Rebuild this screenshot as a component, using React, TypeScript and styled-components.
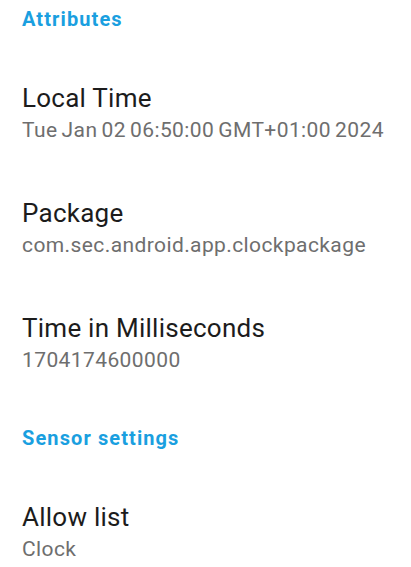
import React from "react";
import styled, { createGlobalStyle } from "styled-components";

const Global = createGlobalStyle`
  html, body { margin: 0; padding: 0; background: #ffffff; }
  body { font-family: Roboto, "Noto Sans", sans-serif; }
`;

const Page = styled.div`
  display: flex;
  flex-direction: column;
  padding: 0 22px;
  background: #ffffff;
`;

const Header = styled.div<{ $top: number }>`
  font-size: 20px;
  font-weight: 700;
  letter-spacing: 1.1px;
  color: #1a9fe0;
  line-height: 24px;
  padding-top: ${(p) => p.$top}px;
  padding-bottom: 26px;
`;

const Item = styled.div`
  display: flex;
  flex-direction: column;
  padding: 26px 0 25px;
`;

const Title = styled.div`
  font-size: 26px;
  color: #1c1c1c;
  line-height: 30px;
  letter-spacing: 0.25px;
`;

const Summary = styled.div`
  font-size: 21px;
  color: #6e6e6e;
  line-height: 34px;
  letter-spacing: 0.4px;
  word-spacing: -1.5px;
  white-space: nowrap;
`;

const items1 = [
  { t: "Local Time", s: "Tue Jan 02 06:50:00 GMT+01:00 2024" },
  { t: "Package", s: "com.sec.android.app.clockpackage" },
  { t: "Time in Milliseconds", s: "1704174600000" },
];

export default function App() {
  return (
    <>
      <Global />
      <Page>
        <Header $top={7}>Attributes</Header>
        {items1.map((i) => (
          <Item key={i.t}>
            <Title>{i.t}</Title>
            <Summary>{i.s}</Summary>
          </Item>
        ))}
        <Header $top={24}>Sensor settings</Header>
        <Item>
          <Title>Allow list</Title>
          <Summary>Clock</Summary>
        </Item>
      </Page>
    </>
  );
}
